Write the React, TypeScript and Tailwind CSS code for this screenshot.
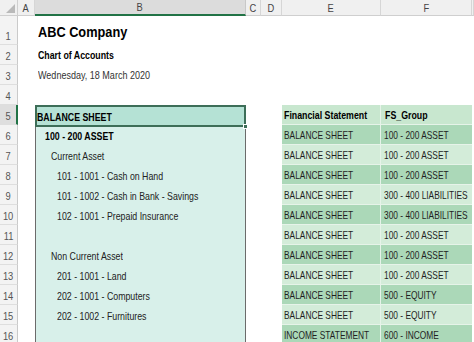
import React from "react";

const S = ({ children, k = "0.8", className = "" }: { children: React.ReactNode; k?: string; className?: string }) => (
  <span
    className={
      "inline-block whitespace-nowrap origin-left " +
      (k === "0.8" ? "scale-x-[0.8] " : k === "0.76" ? "scale-x-[0.76] " : k === "0.85" ? "scale-x-[0.85] " : "scale-x-[0.82] ") +
      className
    }
  >
    {children}
  </span>
);

const tableRows: [string, string][] = [
  ["BALANCE SHEET", "100 - 200 ASSET"],
  ["BALANCE SHEET", "100 - 200 ASSET"],
  ["BALANCE SHEET", "100 - 200 ASSET"],
  ["BALANCE SHEET", "300 - 400 LIABILITIES"],
  ["BALANCE SHEET", "300 - 400 LIABILITIES"],
  ["BALANCE SHEET", "100 - 200 ASSET"],
  ["BALANCE SHEET", "100 - 200 ASSET"],
  ["BALANCE SHEET", "100 - 200 ASSET"],
  ["BALANCE SHEET", "500 - EQUITY"],
  ["BALANCE SHEET", "500 - EQUITY"],
  ["INCOME STATEMENT", "600 - INCOME"],
];

const boxRows: { text: string; indent: string; bold?: boolean }[] = [
  { text: "100 - 200 ASSET", indent: "pl-[9px]", bold: true },
  { text: "Current Asset", indent: "pl-[15px]" },
  { text: "101 - 1001 - Cash on Hand", indent: "pl-[21px]" },
  { text: "101 - 1002 - Cash in Bank - Savings", indent: "pl-[21px]" },
  { text: "102 - 1001 - Prepaid Insurance", indent: "pl-[21px]" },
  { text: "", indent: "" },
  { text: "Non Current Asset", indent: "pl-[15px]" },
  { text: "201 - 1001 - Land", indent: "pl-[21px]" },
  { text: "202 - 1001 - Computers", indent: "pl-[21px]" },
  { text: "202 - 1002 - Furnitures", indent: "pl-[21px]" },
  { text: "", indent: "" },
];

const colHeads = [
  { l: "A", sel: false },
  { l: "B", sel: true },
  { l: "C", sel: false },
  { l: "D", sel: false },
  { l: "E", sel: false },
  { l: "F", sel: false },
  { l: "", sel: false },
];

export default function App() {
  return (
    <div className="w-[474px] h-[342px] overflow-hidden bg-white font-['Liberation_Sans',Arial,sans-serif] text-[11px] leading-[14px] text-[#1a1a1a]">
      <div className="grid grid-cols-[18px_17px_211px_15px_21px_99px_91px_2px] grid-rows-[16px_29px_repeat(15,20px)]">
        {/* corner */}
        <div className="col-start-1 row-start-1 bg-[#f0f0f0] border-r border-b border-[#cfcfcf] flex items-end justify-end p-[2px]">
          <svg width="9" height="9" viewBox="0 0 9 9">
            <polygon points="9,0 9,9 0,9" fill="#b9b9b9" />
          </svg>
        </div>
        {colHeads.map((c, i) => (
          <div
            key={i}
            className={
              "row-start-1 flex items-center justify-center text-[#444] " +
              (c.sel
                ? "bg-[#dcdcdc] border-b-2 border-b-[#217346] border-r border-r-[#c8c8c8]"
                : "bg-[#f0f0f0] border-b border-b-[#cfcfcf] border-r border-r-[#d6d6d6]")
            }
            style={{ gridColumnStart: i + 2 }}
          >
            <span className="inline-block scale-x-[0.85]">{c.l}</span>
          </div>
        ))}

        {/* row headers */}
        {Array.from({ length: 16 }, (_, i) => (
          <div
            key={i}
            className={
              "col-start-1 flex justify-center text-[#555] border-b border-[#dedede] " +
              (i === 0 ? "items-end pb-[1px] " : "items-center pt-[2px] ") +
              (i === 4 ? "bg-[#dedede] border-r-2 border-r-[#217346]" : "bg-[#f3f3f3] border-r border-r-[#cacaca]")
            }
            style={{ gridRowStart: i + 2 }}
          >
            <span className="inline-block scale-x-[0.85]">{i + 1}</span>
          </div>
        ))}

        {/* row 1-3 text */}
        <div className="col-start-3 row-start-2 flex items-end pb-[4px] pl-[3px]">
          <S k="0.85" className="text-[15px] leading-[18px] font-bold text-black">ABC Company</S>
        </div>
        <div className="col-start-3 row-start-3 flex items-center pl-[3px]">
          <S className="font-bold text-black">Chart of Accounts</S>
        </div>
        <div className="col-start-3 row-start-4 flex items-center pl-[3px]">
          <S k="0.82" className="text-[#333]">Wednesday, 18 March 2020</S>
        </div>

        {/* box B5:B16 */}
        <div className="col-start-3 row-start-6 row-span-12 flex flex-col border-l border-r border-t border-[#6b6b6b] bg-[#d8f0ea]">
          <div className="relative h-[20px] shrink-0 bg-[#b5e2d5] flex items-center pl-[1px] pt-[1px]">
            <S className="font-bold text-black">BALANCE SHEET</S>
            <div className="absolute -left-px -top-px -right-px -bottom-px border-2 border-[#3d6e58] pointer-events-none" />
            <div className="absolute -right-[3px] -bottom-[3px] w-[5px] h-[5px] bg-[#3d6e58] border border-white" />
          </div>
          {boxRows.map((r, i) => (
            <div key={i} className={"h-[20px] shrink-0 flex items-center " + r.indent}>
              {r.text && <S k="0.8" className={r.bold ? "font-bold text-black" : "text-[#222]"}>{r.text}</S>}
            </div>
          ))}
        </div>

        {/* table E5:F16 */}
        <div className="col-start-6 col-span-2 row-start-6 row-span-12 grid grid-cols-[99px_91px] auto-rows-[20px] content-start">
          <div className="bg-[#c8e7cf] border-r border-b border-[#e6f3e9] flex items-center pl-[2px]">
            <S className="font-bold text-black">Financial Statement</S>
          </div>
          <div className="bg-[#c8e7cf] border-b border-[#e6f3e9] flex items-center pl-[4px]">
            <S className="font-bold text-black">FS_Group</S>
          </div>
          {tableRows.map(([a, b], i) => {
            const bg = i % 2 === 0 ? "bg-[#abd8b8]" : "bg-[#d3ecd9]";
            return (
              <React.Fragment key={i}>
                <div className={bg + " border-r border-b border-[#e6f3e9] flex items-center pl-[2px]"}>
                  <S k="0.76" className="text-[#1f1f1f]">{a}</S>
                </div>
                <div className={bg + " border-b border-[#e6f3e9] flex items-center pl-[3px]"}>
                  <S k="0.76" className="text-[#1f1f1f]">{b}</S>
                </div>
              </React.Fragment>
            );
          })}
        </div>
      </div>
    </div>
  );
}
